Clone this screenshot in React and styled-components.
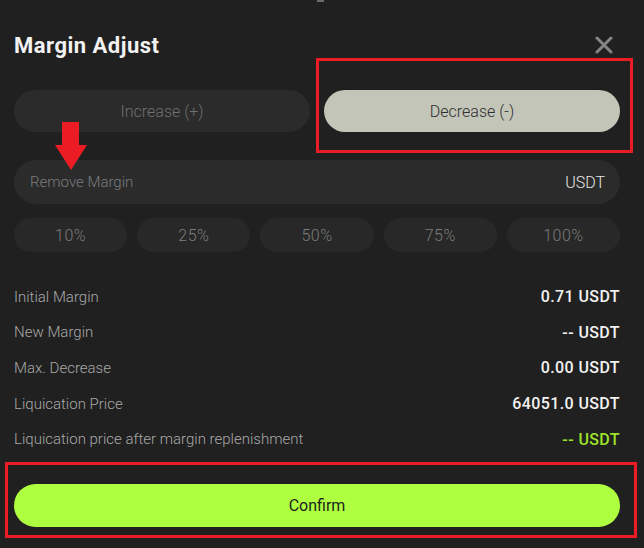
import React, { useState } from 'react';
import styled, { createGlobalStyle } from 'styled-components';

const colors = {
  bg: '#202020',
  field: '#2a2b2a',
  activeTab: '#c3c5b9',
  label: '#a9a9a9',
  muted: '#6f706f',
  white: '#f2f2f2',
  lime: '#adff3f',
  green: '#9fe32b',
  red: '#ec1c24',
};

const GlobalStyle = createGlobalStyle`
  html, body {
    margin: 0;
    padding: 0;
    background: ${colors.bg};
  }
  body {
    font-family: Roboto, "Liberation Sans", sans-serif;
  }
`;

const Dialog = styled.div`
  position: relative;
  width: 644px;
  height: 548px;
  box-sizing: border-box;
  padding: 30px 24px 0 14px;
  background: ${colors.bg};
  overflow: hidden;
`;

const Notch = styled.span`
  position: absolute;
  top: 0;
  left: 317px;
  width: 7px;
  height: 2px;
  background: #6a6a6a;
`;

const Header = styled.div`
  display: flex;
  align-items: center;
  justify-content: space-between;
  height: 30px;
`;

const Title = styled.h2`
  margin: 0;
  font-size: 22px;
  font-weight: 700;
  letter-spacing: 0.5px;
  color: ${colors.white};
`;

const CloseButton = styled.button`
  display: flex;
  align-items: center;
  justify-content: center;
  width: 24px;
  height: 24px;
  margin-right: 4px;
  padding: 0;
  border: 0;
  background: transparent;
  cursor: pointer;
`;

const Tabs = styled.div`
  display: grid;
  grid-template-columns: 1fr 1fr;
  gap: 14px;
  margin-top: 30px;
`;

const Tab = styled.button`
  height: 42px;
  border: 0;
  border-radius: 21px;
  font-family: Roboto, "Liberation Sans", sans-serif;
  font-size: 16px;
  font-weight: 300;
  background: ${props => (props.isActive ? colors.activeTab : colors.field)};
  color: ${props => (props.isActive ? '#2e2e2e' : colors.muted)};
  cursor: pointer;
`;

const Field = styled.label`
  display: flex;
  align-items: center;
  justify-content: space-between;
  height: 44px;
  margin-top: 28px;
  padding: 0 15px 0 16px;
  border-radius: 22px;
  background: ${colors.field};
`;

const Input = styled.input`
  flex: 1;
  border: 0;
  outline: none;
  padding: 0;
  background: transparent;
  font-family: Roboto, "Liberation Sans", sans-serif;
  font-size: 15px;
  font-weight: 300;
  color: ${colors.white};
  &::placeholder {
    color: #7a7c80;
  }
`;

const Unit = styled.span`
  font-size: 16px;
  font-weight: 300;
  color: #e6e6e6;
`;

const Chips = styled.div`
  display: grid;
  grid-template-columns: repeat(5, 1fr);
  gap: 10px;
  margin-top: 14px;
`;

const Chip = styled.button`
  height: 34px;
  border: 0;
  border-radius: 17px;
  background: #272827;
  font-family: Roboto, "Liberation Sans", sans-serif;
  font-size: 16px;
  font-weight: 300;
  letter-spacing: 0.5px;
  color: #7c7c7c;
  cursor: pointer;
`;

const InfoList = styled.dl`
  margin: 27px 0 0;
`;

const InfoRow = styled.div`
  display: flex;
  align-items: center;
  justify-content: space-between;
  height: 35.6px;
`;

const Label = styled.dt`
  font-size: 15px;
  font-weight: 300;
  color: ${colors.label};
`;

const Value = styled.dd`
  margin: 0;
  font-size: 16px;
  font-weight: 500;
  letter-spacing: 0.4px;
  color: ${props => (props.highlight ? colors.green : colors.white)};
`;

const ConfirmButton = styled.button`
  display: block;
  width: 100%;
  height: 43px;
  margin-top: 27px;
  border: 0;
  border-radius: 22px;
  background: ${colors.lime};
  font-family: Roboto, "Liberation Sans", sans-serif;
  font-size: 16px;
  color: #1e1e1e;
  cursor: pointer;
`;

const Highlight = styled.div`
  position: absolute;
  box-sizing: border-box;
  border: 3px solid ${colors.red};
  pointer-events: none;
`;

const Arrow = styled.svg`
  position: absolute;
  left: 54px;
  top: 122px;
  pointer-events: none;
`;

const percents = ['10%', '25%', '50%', '75%', '100%'];

const details = [
  { label: 'Initial Margin', value: '0.71 USDT' },
  { label: 'New Margin', value: '-- USDT' },
  { label: 'Max. Decrease', value: '0.00 USDT' },
  { label: 'Liquication Price', value: '64051.0 USDT' },
  { label: 'Liquication price after margin replenishment', value: '-- USDT', highlight: true },
];

export default function App() {
  const [mode, setMode] = useState('decrease');

  return (
    <>
      <GlobalStyle />
      <Dialog>
        <Notch />
        <Header>
          <Title>Margin Adjust</Title>
          <CloseButton aria-label="Close">
            <svg width="18" height="18" viewBox="0 0 18 18">
              <path d="M2 2L16 16M16 2L2 16" stroke="#858585" strokeWidth="3" strokeLinecap="round" />
            </svg>
          </CloseButton>
        </Header>

        <Tabs role="tablist">
          <Tab isActive={mode === 'increase'} onClick={() => setMode('increase')}>
            Increase (+)
          </Tab>
          <Tab isActive={mode === 'decrease'} onClick={() => setMode('decrease')}>
            Decrease (-)
          </Tab>
        </Tabs>

        <Field>
          <Input placeholder="Remove Margin" />
          <Unit>USDT</Unit>
        </Field>

        <Chips>
          {percents.map(p => (
            <Chip key={p}>{p}</Chip>
          ))}
        </Chips>

        <InfoList>
          {details.map(d => (
            <InfoRow key={d.label}>
              <Label>{d.label}</Label>
              <Value highlight={d.highlight}>{d.value}</Value>
            </InfoRow>
          ))}
        </InfoList>

        <ConfirmButton>Confirm</ConfirmButton>

        <Highlight style={{ left: 316, top: 58, width: 317, height: 95 }} />
        <Highlight style={{ left: 5, top: 462, width: 632, height: 76 }} />
        <Arrow width="34" height="49" viewBox="0 0 34 49">
          <path d="M8 0H25V23H33L17 48L1 23H8Z" fill={colors.red} />
        </Arrow>
      </Dialog>
    </>
  );
}
